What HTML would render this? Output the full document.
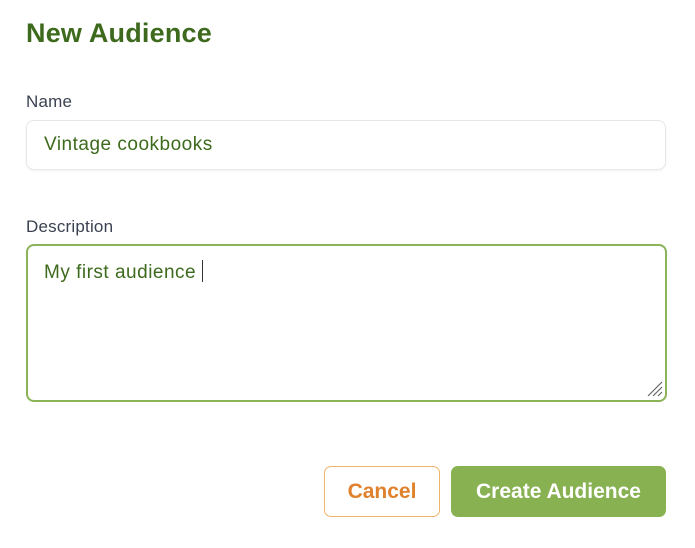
<!DOCTYPE html>
<html><head><style>
body{margin:0;background:#fff;width:695px;height:548px;position:relative;font-family:"Liberation Sans",sans-serif;overflow:hidden}
.a{position:absolute}
h1{position:absolute;left:26px;top:18px;margin:0;font-size:27px;font-weight:bold;color:#3d6a1c;letter-spacing:0.2px}
.lbl{font-size:17px;color:#3a4150;left:26px;letter-spacing:0.2px}
.inp{left:26px;width:638px;top:120px;height:48px;border:1px solid #e5e7eb;border-radius:8px;box-shadow:0 1px 2px rgba(0,0,0,.06)}
.txt{font-size:19px;color:#3d6a1c;left:44px;letter-spacing:0.5px}
.ta{left:26px;top:244px;border:2px solid #8ab457;border-radius:8px;box-sizing:border-box;width:641px;height:158px}
.btn{top:466px;height:51px;border-radius:7px;font-size:21px;font-weight:bold;display:flex;align-items:center;justify-content:center;box-sizing:border-box}
</style></head><body>
<h1>New Audience</h1>
<div class="a lbl" style="top:92px">Name</div>
<div class="a inp"></div>
<div class="a txt" style="top:134px">Vintage cookbooks</div>
<div class="a lbl" style="top:217px">Description</div>
<div class="a ta"></div>
<div class="a txt" style="top:260px">My first audience <span style="display:inline-block;width:1px;height:22px;background:#333;vertical-align:-4px;margin-left:0px"></span></div>
<svg class="a" style="left:646px;top:380px" width="18" height="18"><path d="M2 16L16 2M7 16L16 7M12 16L16 12" stroke="#666" stroke-width="1.2"/></svg>
<div class="a btn" style="left:324px;width:116px;border:1px solid #f1b26b;color:#e0812d">Cancel</div>
<div class="a btn" style="left:451px;width:215px;background:#88b152;color:#fff">Create Audience</div>
</body></html>
